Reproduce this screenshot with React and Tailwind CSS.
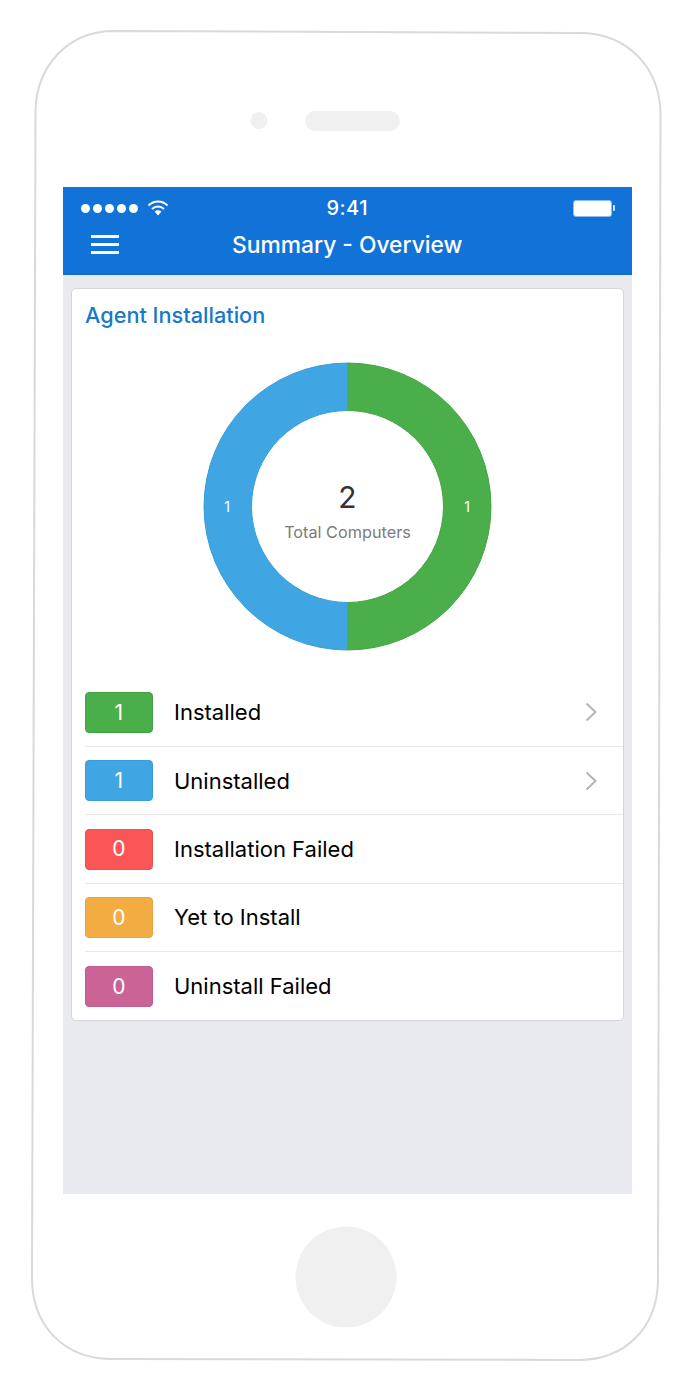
import React from 'react';

const rows = [
  { count: 1, label: 'Installed', color: 'bg-[#4aaf4a] border-[#43a343]', arrow: true },
  { count: 1, label: 'Uninstalled', color: 'bg-[#3fa6e3] border-[#3a9cd8]', arrow: true },
  { count: 0, label: 'Installation Failed', color: 'bg-[#fb5656] border-[#ee5050]' },
  { count: 0, label: 'Yet to Install', color: 'bg-[#f2ac42] border-[#e6a33e]' },
  { count: 0, label: 'Uninstall Failed', color: 'bg-[#cc6397] border-[#c05c8e]' },
];

// Outline of the phone, camera, speaker and home button
function PhoneFrame() {
  return (
    <svg className="absolute inset-0" width="692" height="1390" viewBox="0 0 692 1390" fill="none">
      <path
        d="M114 31 L582 33 C628 34 660 68 660.5 114 L658 1280 C657.5 1328 625 1360 578 1360 L110 1359 C64 1358 32 1326 32 1278 L35.5 112 C36 66 68 31 114 31 Z"
        stroke="#d9d9d9"
        strokeWidth="2"
        fill="#fff"
      />
      <circle cx="259" cy="120.5" r="8.5" fill="#f0f0f0" />
      <rect x="305" y="111" width="95" height="20" rx="10" fill="#f0f0f0" />
      <circle cx="346" cy="1277" r="50.5" fill="#f0f0f0" />
    </svg>
  );
}

function StatusBar() {
  return (
    <div className="flex h-[41px] items-center justify-between pl-[18px] pr-[16px] pt-[1px]">
      <div className="flex w-[120px] items-center gap-[3px]">
        {[0, 1, 2, 3, 4].map((i) => (
          <span key={i} className="h-[9px] w-[9px] rounded-full bg-white" />
        ))}
        <svg width="24" height="18" viewBox="0 0 24 18" fill="none" className="ml-[5px]">
          <path d="M2.5 6.5C8 1.2 16 1.2 21.5 6.5" stroke="#fff" strokeWidth="2" />
          <path d="M6 10C9.5 6.7 14.5 6.7 18 10" stroke="#fff" strokeWidth="2" />
          <path d="M8.6 12.6C10.6 10.9 13.4 10.9 15.4 12.6L12 16.4Z" fill="#fff" />
        </svg>
      </div>
      <span className="pr-[2px] text-[20px] font-medium tracking-[0.5px] text-white">9:41</span>
      <div className="flex w-[120px] items-center justify-end">
        <div className="h-[17px] w-[39px] rounded-[3px] border border-[#8fbcf0] bg-white" />
        <div className="ml-[1px] h-[6px] w-[2px] rounded-r-[1px] bg-[#cfe2f8]" />
      </div>
    </div>
  );
}

function NavBar() {
  return (
    <div className="relative flex h-[47px] items-center justify-center">
      <div className="absolute left-[28px] top-[7px] flex w-[28px] flex-col gap-[5.5px]">
        <span className="h-[2.5px] bg-white" />
        <span className="h-[2.5px] bg-white" />
        <span className="h-[2.5px] bg-white" />
      </div>
      <h1 className="pb-[13px] text-[22.8px] font-medium leading-[28px] text-white">Summary - Overview</h1>
    </div>
  );
}

function Donut() {
  return (
    <div className="relative mx-auto h-[289px] w-[289px]">
      <svg width="289" height="289" viewBox="0 0 289 289" fill="none">
        <path d="M144.5 1 A143.5 143.5 0 0 1 144.5 288 L144.5 240.5 A96 96 0 0 0 144.5 48.5 Z" fill="#4aaf4a" stroke="#43a343" />
        <path d="M144.5 288 A143.5 143.5 0 0 1 144.5 1 L144.5 48.5 A96 96 0 0 0 144.5 240.5 Z" fill="#3fa6e3" stroke="#3a9cd8" />
      </svg>
      <span className="absolute left-[18px] top-[136px] w-[12px] text-center text-[14px] leading-[18px] text-white">1</span>
      <span className="absolute left-[258px] top-[136px] w-[12px] text-center text-[14px] leading-[18px] text-white">1</span>
      <div className="absolute inset-x-0 top-[117px] flex flex-col items-center">
        <span className="text-[30px] leading-[36px] text-[#333333]">2</span>
        <span className="mt-[6px] text-[16.25px] leading-[22px] text-[#7b7b7b]">Total Computers</span>
      </div>
    </div>
  );
}

export default function App() {
  return (
    <div className="relative h-[1390px] w-[692px] bg-white font-['Inter',sans-serif]">
      <PhoneFrame />
      <div className="relative pl-[63px] pt-[187px]">
        <div className="flex h-[1007px] w-[568.5px] flex-col bg-[#e9eaef]">
          <header className="h-[88px] border-b border-[#0f68c4] bg-[#1173d8]">
            <StatusBar />
            <NavBar />
          </header>

          <div className="ml-[8px] mt-[13px] h-[733px] w-[553px] rounded-[5px] border border-[#d6d6da] bg-white">
            <h2 className="pb-[1px] pl-[13px] pt-[12px] text-[21.7px] font-medium leading-[28px] text-[#1879c9]">Agent Installation</h2>
            <div className="pt-[32px]">
              <Donut />
            </div>
            <div className="mt-[27.6px] pl-[12.5px]">
              {rows.map((row, i) => (
                <div
                  key={row.label}
                  className={`flex h-[68.4px] items-center ${i < rows.length - 1 ? 'border-b border-[#e8e8e8]' : ''}`}
                >
                  <div className={`flex h-[41px] w-[68.5px] items-center justify-center rounded-[4px] border text-[21px] text-white ${row.color}`}>
                    {row.count}
                  </div>
                  <span className="ml-[21px] flex-1 pt-[1px] text-[22px] text-black">{row.label}</span>
                  {row.arrow && (
                    <svg width="12" height="20" viewBox="0 0 12 20" fill="none" className="mr-[26px]">
                      <path d="M1.5 1.5L10.5 10L1.5 18.5" stroke="#b4b4b8" strokeWidth="2" />
                    </svg>
                  )}
                </div>
              ))}
            </div>
          </div>
        </div>
      </div>
    </div>
  );
}
